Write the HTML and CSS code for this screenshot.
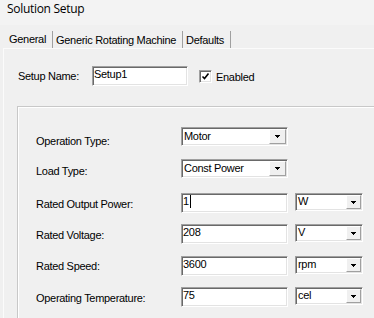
FILE: index.html
```html
<!DOCTYPE html>
<html lang="en">
<head>
    <meta charset="UTF-8">
    <meta name="viewport" content="width=device-width, initial-scale=1.0">
    <title>Solution Setup</title>
    <link rel="stylesheet" href="styles.css">
</head>
<body>

<div class="title">Solution Setup</div>

<div class="tabs">
    <span class="tab active">General</span>
    <span class="tab">Generic Rotating Machine</span>
    <span class="tab">Defaults</span>
</div>

<div class="page">
    <div class="setup-row">
        <span class="setup-label">Setup Name:</span>
        <div class="textbox name-box">Setup1</div>
        <span class="check">
            <svg width="9" height="9" viewBox="0 0 9 9"><path d="M1.5 4.5l2 2 4-5" fill="none" stroke="#000" stroke-width="1.6"/></svg>
        </span>
        <span class="check-label">Enabled</span>
    </div>

    <div class="group">
        <div class="rows">
            <div class="row row-op">
                <span class="label">Operation Type:</span>
                <div class="combo">
                    <span class="combo-text">Motor</span>
                    <span class="combo-btn"><svg width="5" height="3" viewBox="0 0 5 3"><path d="M0 0h5v1H0zM1 1h3v1H1zM2 2h1v1H2z"/></svg></span>
                </div>
            </div>
            <div class="row row-load">
                <span class="label">Load Type:</span>
                <div class="combo">
                    <span class="combo-text">Const Power</span>
                    <span class="combo-btn"><svg width="5" height="3" viewBox="0 0 5 3"><path d="M0 0h5v1H0zM1 1h3v1H1zM2 2h1v1H2z"/></svg></span>
                </div>
            </div>
            <div class="row">
                <span class="label">Rated Output Power:</span>
                <div class="textbox">1<span class="caret"></span></div>
                <div class="combo unit">
                    <span class="combo-text">W</span>
                    <span class="combo-btn"><svg width="5" height="3" viewBox="0 0 5 3"><path d="M0 0h5v1H0zM1 1h3v1H1zM2 2h1v1H2z"/></svg></span>
                </div>
            </div>
            <div class="row">
                <span class="label">Rated Voltage:</span>
                <div class="textbox">208</div>
                <div class="combo unit">
                    <span class="combo-text">V</span>
                    <span class="combo-btn"><svg width="5" height="3" viewBox="0 0 5 3"><path d="M0 0h5v1H0zM1 1h3v1H1zM2 2h1v1H2z"/></svg></span>
                </div>
            </div>
            <div class="row row-speed">
                <span class="label">Rated Speed:</span>
                <div class="textbox">3600</div>
                <div class="combo unit">
                    <span class="combo-text">rpm</span>
                    <span class="combo-btn"><svg width="5" height="3" viewBox="0 0 5 3"><path d="M0 0h5v1H0zM1 1h3v1H1zM2 2h1v1H2z"/></svg></span>
                </div>
            </div>
            <div class="row">
                <span class="label">Operating Temperature:</span>
                <div class="textbox">75</div>
                <div class="combo unit">
                    <span class="combo-text">cel</span>
                    <span class="combo-btn"><svg width="5" height="3" viewBox="0 0 5 3"><path d="M0 0h5v1H0zM1 1h3v1H1zM2 2h1v1H2z"/></svg></span>
                </div>
            </div>
        </div>
    </div>
</div>

</body>
</html>
```

FILE: styles.css
```css
body {
    margin: 0;
    height: 318px;
    overflow: hidden;
    background-color: #f0f0f0;
    font-family: "Liberation Sans", Arial, sans-serif;
    font-size: 11px;
    letter-spacing: -0.3px;
    color: #000;
}

.title {
    height: 25px;
    padding-left: 7px;
    background-color: #f3f3f3;
    font-family: "Open Sans", sans-serif;
    font-size: 12px;
    line-height: 18px;
}

/* tab strip */
.tabs {
    display: flex;
    height: 17px;
    margin-top: 6px;
    padding-left: 5px;
}

.tab {
    padding: 2px 6px 0 3px;
    line-height: 15px;
    border-right: 1px solid #a0a0a0;
}

.tab.active {
    padding: 0 6px 0 4px;
    line-height: 17px;
}

.page {
    margin-left: 3px;
    border-top: 1px solid #fbfbfb;
    border-left: 1px solid #fbfbfb;
    height: 300px;
}

/* setup name line */
.setup-row {
    display: flex;
    align-items: flex-start;
    height: 20px;
    margin-top: 17px;
    padding-left: 14px;
}

.setup-label {
    width: 74px;
    line-height: 20px;
}

.check {
    display: flex;
    align-items: center;
    justify-content: center;
    box-sizing: border-box;
    width: 13px;
    height: 13px;
    margin: 4px 0 0 11px;
    background-color: #fff;
    border: 1px solid;
    border-color: #a0a0a0 #fff #fff #a0a0a0;
    box-shadow: inset 1px 1px 0 #696969, inset -1px -1px 0 #e3e3e3;
}

.check-label {
    margin-left: 4px;
    padding-top: 1px;
    line-height: 20px;
}

/* group box */
.group {
    width: 420px;
    height: 260px;
    margin: 20px 0 0 13px;
    border-top: 1px solid #c8c8c8;
    border-left: 1px solid #c8c8c8;
    box-shadow: inset 1px 1px 0 #fff;
    padding: 20px 0 0 18px;
}

.rows {
    display: grid;
    grid-template-rows: 32px 34px 31px 32px 31px 20px;
}

.row {
    display: flex;
    align-items: flex-start;
}

.label {
    width: 145px;
    padding-top: 1px;
    line-height: 20px;
}

.row-op .label {
    padding-top: 4px;
}

.row-load .label {
    padding-top: 2px;
}

.row-speed .label {
    padding-top: 0;
}

/* fields */
.textbox {
    box-sizing: border-box;
    width: 107px;
    height: 20px;
    padding-left: 1px;
    line-height: 14px;
    background-color: #fff;
    border: 1px solid;
    border-color: #a0a0a0 #fff #fff #a0a0a0;
    box-shadow: inset 1px 1px 0 #696969, inset -1px -1px 0 #e3e3e3;
}

.textbox.name-box {
    width: 96px;
}

.caret {
    display: inline-block;
    width: 1px;
    height: 13px;
    margin-left: 1px;
    vertical-align: -3px;
    background-color: #000;
}

.combo {
    display: flex;
    box-sizing: border-box;
    width: 107px;
    height: 19px;
    background-color: #fff;
    border: 1px solid;
    border-color: #a0a0a0 #fff #fff #a0a0a0;
    box-shadow: inset 1px 1px 0 #696969, inset -1px -1px 0 #e3e3e3;
}

.combo-text {
    flex: 1;
    padding-left: 2px;
    line-height: 17px;
}

.combo-btn {
    display: flex;
    align-items: center;
    justify-content: center;
    box-sizing: border-box;
    width: 17px;
    margin: 1px 1px 1px 0;
    background-color: #f0f0f0;
    border: 1px solid;
    border-color: #fff #a0a0a0 #a0a0a0 #fff;
}

.combo.unit {
    width: 68px;
    height: 18px;
    margin-left: 7px;
}

.combo.unit .combo-text {
    line-height: 15px;
}

.combo.unit .combo-btn {
    width: 15px;
}
```
